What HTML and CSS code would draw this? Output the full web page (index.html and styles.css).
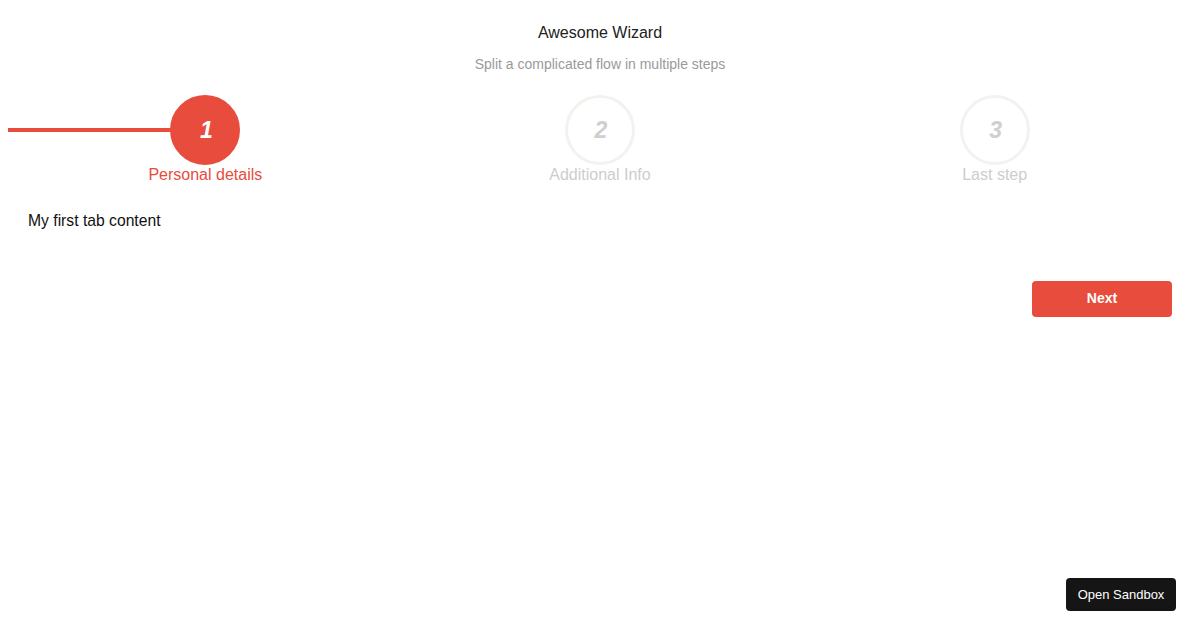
FILE: index.html
```html
<!DOCTYPE html>
<html>
<head>
<meta charset="utf-8">
<link rel="stylesheet" href="styles.css">
</head>
<body>
<div class="wizard">
  <div class="wizard-header">
    <h4 class="wizard-title">Awesome Wizard</h4>
    <p class="category">Split a complicated flow in multiple steps</p>
  </div>
  <div class="wizard-navigation">
    <div class="progress-track"><div class="progress-bar"></div></div>
    <ul class="steps">
      <li class="step active">
        <div class="circle"><i class="num">1</i></div>
        <span class="step-title">Personal details</span>
      </li>
      <li class="step">
        <div class="circle"><i class="num">2</i></div>
        <span class="step-title">Additional Info</span>
      </li>
      <li class="step">
        <div class="circle"><i class="num">3</i></div>
        <span class="step-title">Last step</span>
      </li>
    </ul>
  </div>
  <div class="tab-content">My first tab content</div>
  <div class="wizard-footer">
    <button class="btn-next">Next</button>
  </div>
</div>
<a class="sandbox-btn">Open Sandbox</a>
</body>
</html>
```
FILE: styles.css
```css
html, body {
  background: #fff;
}
body {
  margin: 8px;
  font-family: "Liberation Sans", Arial, sans-serif;
  color: #111;
}
.wizard-header {
  text-align: center;
  padding-top: 13px;
}
.wizard-title {
  margin: 0;
  font-size: 16px;
  font-weight: 400;
  line-height: 24px;
  color: #222;
}
.category {
  margin: 9px 0 0;
  font-size: 14px;
  line-height: 21px;
  color: #9a9a9a;
}
.wizard-navigation {
  position: relative;
  margin-top: 20px;
}
.progress-track {
  position: absolute;
  left: 0;
  right: 0;
  top: 33px;
  height: 4px;
}
.progress-bar {
  width: 16.6667%;
  height: 4px;
  background: #e74c3c;
}
.steps {
  position: relative;
  display: flex;
  list-style: none;
  margin: 0;
  padding: 0;
}
.step {
  flex: 1;
  display: flex;
  flex-direction: column;
  align-items: center;
}
.circle {
  width: 70px;
  height: 70px;
  box-sizing: border-box;
  border-radius: 50%;
  border: 3px solid #f3f2ee;
  background: #fff;
  display: flex;
  align-items: center;
  justify-content: center;
}
.num {
  font-size: 23px;
  font-weight: 700;
  font-style: italic;
  color: #cfcfcf;
  padding-left: 2px;
}
.step-title {
  font-size: 16px;
  line-height: 20px;
  color: #cdcdcd;
}
.step.active .circle {
  background: #e74c3c;
  border-color: #e74c3c;
}
.step.active .num {
  color: #fff;
}
.step.active .step-title {
  color: #e74c3c;
}
.tab-content {
  padding: 24px 20px 0;
  font-size: 15.7px;
  line-height: 24px;
  color: #111;
}
.wizard-footer {
  display: flex;
  justify-content: flex-end;
  padding: 48px 20px 0;
}
.btn-next {
  width: 140px;
  height: 36px;
  padding: 0 0 2px;
  border: none;
  border-radius: 4px;
  background: #e74c3c;
  color: #fff;
  font-family: "Liberation Sans", Arial, sans-serif;
  font-size: 14px;
  font-weight: 700;
  cursor: pointer;
}
.sandbox-btn {
  position: fixed;
  right: 24px;
  bottom: 19px;
  width: 110px;
  height: 33px;
  box-sizing: border-box;
  display: flex;
  align-items: center;
  justify-content: center;
  background: #151515;
  color: #fff;
  border-radius: 4px;
  font-size: 13px;
}
```
